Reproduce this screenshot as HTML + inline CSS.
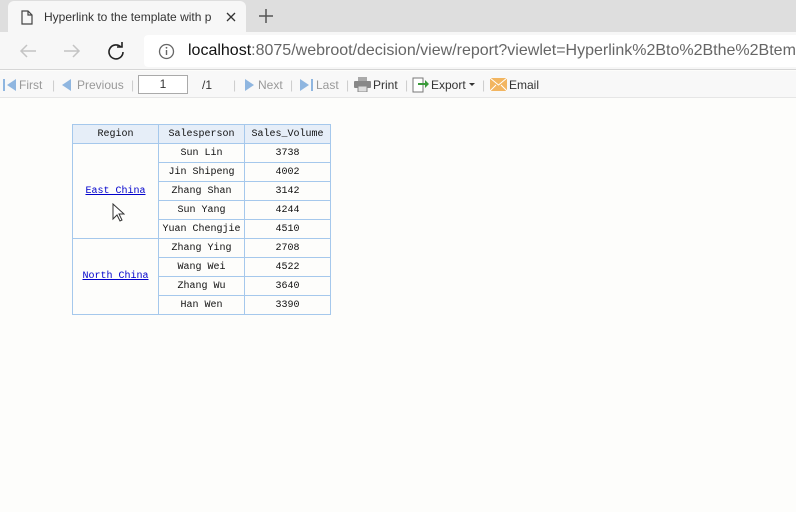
<!DOCTYPE html>
<html><head><meta charset="utf-8"><style>
*{margin:0;padding:0;box-sizing:border-box}
body{width:796px;height:512px;overflow:hidden;background:#fdfdfb;font-family:"Liberation Sans",sans-serif;position:relative}
.tabbar{position:absolute;left:0;top:0;width:796px;height:32px;background:#dedede}
.tab{position:absolute;left:8px;top:1px;width:238px;height:31px;background:#f7f7f7;border-radius:6px 6px 0 0}
.tab .t{position:absolute;left:36px;top:9px;font-size:12px;color:#333;white-space:nowrap;width:172px;overflow:hidden}
.addr{position:absolute;left:0;top:32px;width:796px;height:38px;background:#f7f7f7;border-bottom:1px solid #d6d6d6}
.url{position:absolute;left:144px;top:3px;width:660px;height:32px;background:#fff;border-radius:4px}
.url .u{position:absolute;left:44px;top:7px;font-size:16px;color:#666;white-space:nowrap}
.url .u b{font-weight:normal;color:#111}
.tool{position:absolute;left:0;top:71px;width:796px;height:27px;background:#f8f8f8;border-bottom:1px solid #e6e6e6;font-size:12px;color:#999}
.tool span{position:absolute;top:7px;white-space:nowrap}
.sep{color:#ccc}
.dark{color:#333}
.pg{position:absolute;left:138px;top:4px;width:50px;height:19px;border:1px solid #aaa;background:#fff;text-align:center;font-size:12px;color:#333;line-height:17px}
table{position:absolute;left:72px;top:124px;border-collapse:collapse;font-family:"Liberation Mono","DejaVu Sans Mono",monospace;font-size:10px;color:#111;table-layout:fixed}
td{border:1px solid #a5c8ec;height:19px;text-align:center;padding:0;line-height:17px;white-space:nowrap;overflow:hidden}
th{border:1px solid #a5c8ec;height:19px;background:#e6eef8;font-weight:normal;padding:0;white-space:nowrap}
a{color:#00c;text-decoration:underline}
</style></head><body>
<div class="tabbar">
 <div class="tab">
  <svg style="position:absolute;left:13px;top:9px" width="12" height="15"><path d="M1 1h6l4 4v9H1z M7 1v4h4" fill="none" stroke="#444" stroke-width="1.2"/></svg>
  <div class="t">Hyperlink to the template with p</div>
  <svg style="position:absolute;left:218px;top:11px" width="10" height="10"><path d="M1 1L9 9M9 1L1 9" stroke="#333" stroke-width="1.3"/></svg>
 </div>
 <svg style="position:absolute;left:258px;top:8px" width="16" height="16"><path d="M8 1v14M1 8h14" stroke="#555" stroke-width="1.5"/></svg>
</div>
<div class="addr">
 <svg style="position:absolute;left:19px;top:10px" width="18" height="18"><path d="M17 9H2M8 3L2 9l6 6" fill="none" stroke="#c4c4c4" stroke-width="1.5"/></svg>
 <svg style="position:absolute;left:63px;top:10px" width="18" height="18"><path d="M1 9h15M10 3l6 6-6 6" fill="none" stroke="#c4c4c4" stroke-width="1.5"/></svg>
 <svg style="position:absolute;left:107px;top:10px" width="18" height="18"><path d="M14 5A7 7 0 1 0 16 10" fill="none" stroke="#222" stroke-width="1.6"/><path d="M10 4h5V-1" fill="none" stroke="#222" stroke-width="1.6" transform="translate(0,1)"/></svg>
 <div class="url">
  <svg style="position:absolute;left:14px;top:8px" width="17" height="17"><circle cx="8.5" cy="8.5" r="7" fill="none" stroke="#666" stroke-width="1.3"/><path d="M8.5 7v5" stroke="#666" stroke-width="1.4"/><circle cx="8.5" cy="4.8" r=".9" fill="#666"/></svg>
  <div class="u"><b>localhost</b>:8075/webroot/decision/view/report?viewlet=Hyperlink%2Bto%2Bthe%2Btem</div>
 </div>
</div>
<div class="tool">
 <svg style="position:absolute;left:3px;top:8px" width="14" height="12"><rect x="0" y="0" width="2" height="12" fill="#8fb6e0"/><path d="M13 0v12L4 6z" fill="#8fb6e0"/></svg>
 <span style="left:19px">First</span><span class="sep" style="left:52px">|</span>
 <svg style="position:absolute;left:62px;top:8px" width="9" height="12"><path d="M9 0v12L0 6z" fill="#8fb6e0"/></svg>
 <span style="left:77px">Previous</span><span class="sep" style="left:131px">|</span>
 <div class="pg">1</div>
 <span class="dark" style="left:202px">/1</span>
 <span class="sep" style="left:233px">|</span>
 <svg style="position:absolute;left:245px;top:8px" width="9" height="12"><path d="M0 0v12L9 6z" fill="#8fb6e0"/></svg>
 <span style="left:258px">Next</span><span class="sep" style="left:290px">|</span>
 <svg style="position:absolute;left:300px;top:8px" width="14" height="12"><path d="M0 0v12L9 6z" fill="#8fb6e0"/><rect x="11" y="0" width="2" height="12" fill="#8fb6e0"/></svg>
 <span style="left:316px">Last</span><span class="sep" style="left:346px">|</span>
 <svg style="position:absolute;left:354px;top:6px" width="17" height="15"><rect x="4" y="0" width="9" height="4" fill="#aaa"/><rect x="0" y="4" width="17" height="7" rx="1" fill="#888"/><rect x="4" y="9" width="9" height="6" fill="#ddd" stroke="#888"/></svg>
 <span class="dark" style="left:373px">Print</span><span class="sep" style="left:405px">|</span>
 <svg style="position:absolute;left:412px;top:5px" width="17" height="18"><path d="M1 2h10v14H1z" fill="#fff" stroke="#777"/><path d="M6 7h7V4l4 4-4 4V9H6z" fill="#3a9a3a"/></svg>
 <span class="dark" style="left:431px">Export</span>
 <svg style="position:absolute;left:469px;top:12px" width="6" height="4"><path d="M0 0h6L3 3z" fill="#333"/></svg>
 <span class="sep" style="left:482px">|</span>
 <svg style="position:absolute;left:490px;top:7px" width="17" height="13"><rect width="17" height="13" fill="#f2b560"/><path d="M0 0l8.5 7L17 0M0 13l6-6M17 13l-6-6" fill="none" stroke="#fff" stroke-width="1"/></svg>
 <span class="dark" style="left:509px">Email</span>
</div>
<table>
<colgroup><col style="width:86px"><col style="width:86px"><col style="width:86px"></colgroup>
<tr><th>Region</th><th>Salesperson</th><th>Sales_Volume</th></tr>
<tr><td rowspan="5"><a>East China</a></td><td>Sun Lin</td><td>3738</td></tr>
<tr><td>Jin Shipeng</td><td>4002</td></tr>
<tr><td>Zhang Shan</td><td>3142</td></tr>
<tr><td>Sun Yang</td><td>4244</td></tr>
<tr><td>Yuan Chengjie</td><td>4510</td></tr>
<tr><td rowspan="4"><a>North China</a></td><td>Zhang Ying</td><td>2708</td></tr>
<tr><td>Wang Wei</td><td>4522</td></tr>
<tr><td>Zhang Wu</td><td>3640</td></tr>
<tr><td>Han Wen</td><td>3390</td></tr>
</table>
<svg style="position:absolute;left:112px;top:203px" width="13" height="20"><path d="M1 1v15l4-4 3 6 2-1-3-6h5z" fill="#fff" stroke="#333" stroke-width="1"/></svg>
</body></html>
